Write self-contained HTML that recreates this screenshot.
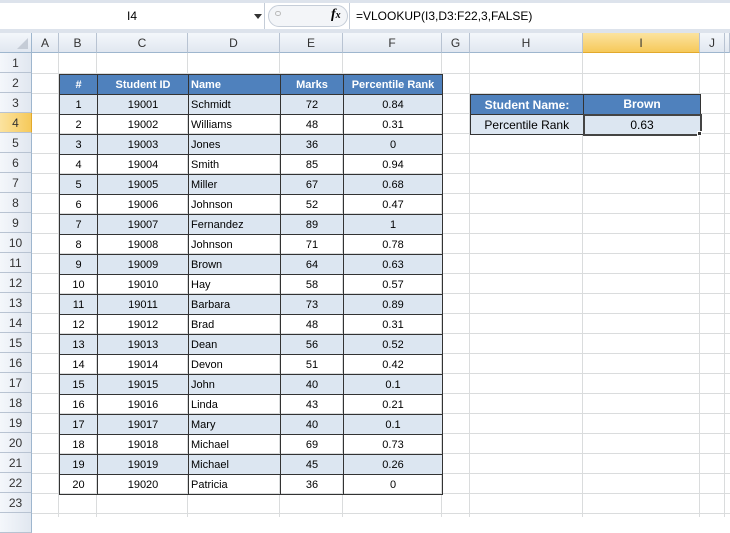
<!DOCTYPE html><html><head><style>
*{margin:0;padding:0;box-sizing:border-box}
body{width:730px;height:517px;background:#fff;font-family:"Liberation Sans",sans-serif;font-size:11px;color:#000;position:relative;overflow:hidden}
.a{position:absolute}
.vl{position:absolute;top:53px;height:464px;width:1px;background:#dadcdd}
.hl{position:absolute;left:32px;width:698px;height:1px;background:#dadcdd}
.ch{position:absolute;top:33px;height:20px;background:linear-gradient(#f4f7fb,#e1e7f0);border-right:1px solid #b8c3d2;border-bottom:1px solid #9eb6ce;text-align:center;line-height:20px;font-size:12px;color:#333}
.rh{position:absolute;left:0;width:32px;height:20px;background:linear-gradient(90deg,#f4f7fb,#e1e7f0);border-right:1px solid #9eb6ce;border-bottom:1px solid #b8c3d2;text-align:center;line-height:20px;font-size:12px;color:#333}
table{position:absolute;left:59px;top:74px;border-collapse:collapse}
td{height:20px;border:1px solid #333;padding:0 2px;font-size:11px;text-align:center}
td.l{text-align:left}
tr.h td{background:#4f81bd;color:#fff;font-weight:bold;border-color:#333}
tr.h td.l{ }
tr.s td{background:#dce6f1}
</style></head><body>
<div class="a" style="left:0;top:0;width:730px;height:33px;background:#fff;border-top:3px solid #dde3ec;border-bottom:4px solid #dde3ec"></div>
<div class="a" style="left:0;top:3px;width:265px;height:26px;border-right:1px solid #c5cdd8;text-align:center;line-height:26px;font-size:12px">I4</div>
<div class="a" style="left:254px;top:14px;width:0;height:0;border-left:4px solid transparent;border-right:4px solid transparent;border-top:5px solid #333"></div>
<div class="a" style="left:268px;top:5px;width:80px;height:22px;border:1px solid #c5cdd8;border-radius:11px;background:#f3f5f8"></div>
<div class="a" style="left:275px;top:11px;width:6px;height:5px;border:1px solid #bbb;border-radius:3px"></div>
<div class="a" style="left:331px;top:7px;font-family:'Liberation Serif',serif;font-style:italic;font-weight:bold;font-size:14px">f<span style="font-size:10px">x</span></div>
<div class="a" style="left:349px;top:3px;width:1px;height:26px;background:#c5cdd8"></div>
<div class="a" style="left:356px;top:3px;line-height:26px;font-size:12px">=VLOOKUP(I3,D3:F22,3,FALSE)</div>

<div class="a" style="left:0;top:33px;width:32px;height:20px;background:linear-gradient(#f4f7fb,#e1e7f0);border-right:1px solid #9eb6ce;border-bottom:1px solid #9eb6ce"></div>
<div class="a" style="left:17px;top:38px;width:0;height:0;border-left:11px solid transparent;border-bottom:11px solid #c5ccd6"></div>
<div class="ch" style="left:32px;width:27px">A</div>
<div class="ch" style="left:59px;width:38px">B</div>
<div class="ch" style="left:97px;width:91px">C</div>
<div class="ch" style="left:188px;width:92px">D</div>
<div class="ch" style="left:280px;width:63px">E</div>
<div class="ch" style="left:343px;width:99px">F</div>
<div class="ch" style="left:442px;width:28px">G</div>
<div class="ch" style="left:470px;width:113px">H</div>
<div class="ch" style="left:583px;width:117px;background:linear-gradient(#fbe3a0,#f6c95a);border-bottom:1px solid #e2a92c">I</div>
<div class="ch" style="left:700px;width:25px">J</div>
<div class="ch" style="left:725px;width:5px"></div>

<div class="vl" style="left:58px"></div><div class="vl" style="left:96px"></div><div class="vl" style="left:187px"></div><div class="vl" style="left:279px"></div><div class="vl" style="left:342px"></div><div class="vl" style="left:441px"></div><div class="vl" style="left:469px"></div><div class="vl" style="left:582px"></div><div class="vl" style="left:699px"></div><div class="vl" style="left:724px"></div>
<div class="hl" style="top:73px"></div><div class="hl" style="top:93px"></div><div class="hl" style="top:113px"></div><div class="hl" style="top:133px"></div><div class="hl" style="top:153px"></div><div class="hl" style="top:173px"></div><div class="hl" style="top:193px"></div><div class="hl" style="top:213px"></div><div class="hl" style="top:233px"></div><div class="hl" style="top:253px"></div><div class="hl" style="top:273px"></div><div class="hl" style="top:293px"></div><div class="hl" style="top:313px"></div><div class="hl" style="top:333px"></div><div class="hl" style="top:353px"></div><div class="hl" style="top:373px"></div><div class="hl" style="top:393px"></div><div class="hl" style="top:413px"></div><div class="hl" style="top:433px"></div><div class="hl" style="top:453px"></div><div class="hl" style="top:473px"></div><div class="hl" style="top:493px"></div><div class="hl" style="top:513px"></div>

<div class="rh" style="top:53px">1</div><div class="rh" style="top:73px">2</div><div class="rh" style="top:93px">3</div>
<div class="rh" style="top:113px;background:linear-gradient(90deg,#fbe3a0,#f6c95a);border-right:1px solid #e2a92c">4</div>
<div class="rh" style="top:133px">5</div><div class="rh" style="top:153px">6</div><div class="rh" style="top:173px">7</div><div class="rh" style="top:193px">8</div><div class="rh" style="top:213px">9</div><div class="rh" style="top:233px">10</div><div class="rh" style="top:253px">11</div><div class="rh" style="top:273px">12</div><div class="rh" style="top:293px">13</div><div class="rh" style="top:313px">14</div><div class="rh" style="top:333px">15</div><div class="rh" style="top:353px">16</div><div class="rh" style="top:373px">17</div><div class="rh" style="top:393px">18</div><div class="rh" style="top:413px">19</div><div class="rh" style="top:433px">20</div><div class="rh" style="top:453px">21</div><div class="rh" style="top:473px">22</div><div class="rh" style="top:493px">23</div><div class="rh" style="top:513px"></div>

<table>
<colgroup><col style="width:38px"><col style="width:91px"><col style="width:92px"><col style="width:63px"><col style="width:99px"></colgroup>
<tr class="h"><td>#</td><td>Student ID</td><td class="l">Name</td><td>Marks</td><td>Percentile Rank</td></tr>
<tr class="s"><td>1</td><td>19001</td><td class="l">Schmidt</td><td>72</td><td>0.84</td></tr>
<tr><td>2</td><td>19002</td><td class="l">Williams</td><td>48</td><td>0.31</td></tr>
<tr class="s"><td>3</td><td>19003</td><td class="l">Jones</td><td>36</td><td>0</td></tr>
<tr><td>4</td><td>19004</td><td class="l">Smith</td><td>85</td><td>0.94</td></tr>
<tr class="s"><td>5</td><td>19005</td><td class="l">Miller</td><td>67</td><td>0.68</td></tr>
<tr><td>6</td><td>19006</td><td class="l">Johnson</td><td>52</td><td>0.47</td></tr>
<tr class="s"><td>7</td><td>19007</td><td class="l">Fernandez</td><td>89</td><td>1</td></tr>
<tr><td>8</td><td>19008</td><td class="l">Johnson</td><td>71</td><td>0.78</td></tr>
<tr class="s"><td>9</td><td>19009</td><td class="l">Brown</td><td>64</td><td>0.63</td></tr>
<tr><td>10</td><td>19010</td><td class="l">Hay</td><td>58</td><td>0.57</td></tr>
<tr class="s"><td>11</td><td>19011</td><td class="l">Barbara</td><td>73</td><td>0.89</td></tr>
<tr><td>12</td><td>19012</td><td class="l">Brad</td><td>48</td><td>0.31</td></tr>
<tr class="s"><td>13</td><td>19013</td><td class="l">Dean</td><td>56</td><td>0.52</td></tr>
<tr><td>14</td><td>19014</td><td class="l">Devon</td><td>51</td><td>0.42</td></tr>
<tr class="s"><td>15</td><td>19015</td><td class="l">John</td><td>40</td><td>0.1</td></tr>
<tr><td>16</td><td>19016</td><td class="l">Linda</td><td>43</td><td>0.21</td></tr>
<tr class="s"><td>17</td><td>19017</td><td class="l">Mary</td><td>40</td><td>0.1</td></tr>
<tr><td>18</td><td>19018</td><td class="l">Michael</td><td>69</td><td>0.73</td></tr>
<tr class="s"><td>19</td><td>19019</td><td class="l">Michael</td><td>45</td><td>0.26</td></tr>
<tr><td>20</td><td>19020</td><td class="l">Patricia</td><td>36</td><td>0</td></tr>
</table>

<table style="left:470px;top:94px">
<colgroup><col style="width:113px"><col style="width:117px"></colgroup>
<tr class="h"><td style="font-size:12px">Student Name:</td><td style="font-size:12px">Brown</td></tr>
<tr class="s"><td style="font-size:12px">Percentile Rank</td><td style="font-size:12px;border:2px solid #444">0.63</td></tr>
</table>
<div class="a" style="left:697px;top:131px;width:5px;height:5px;background:#333;border:1px solid #fff"></div>
</body></html>
